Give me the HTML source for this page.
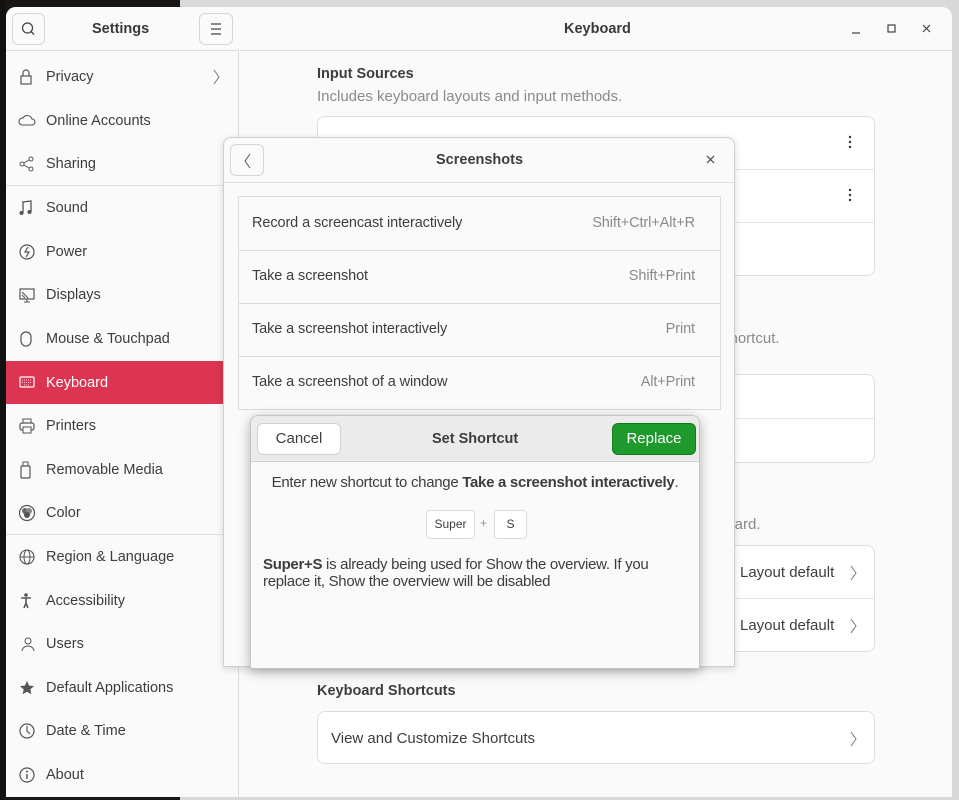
<!DOCTYPE html>
<html><head><meta charset="utf-8"><style>
*{box-sizing:border-box;margin:0;padding:0}
body{width:959px;height:800px;position:relative;overflow:hidden;background:#1a1614;font-family:"Liberation Sans",sans-serif;font-size:15px;color:#3d3d3d}
.a{position:absolute}
.t{position:absolute;white-space:nowrap}
.win{left:6px;top:7px;width:946px;height:790px;background:#fafafa;border-radius:10px 10px 0 0;overflow:hidden}
.side{left:0;top:0;width:233px;height:790px;background:#fafafa;border-right:1px solid #dcdcdc}
.item{position:absolute;left:0;width:233px;height:43px}
.item .lbl{position:absolute;left:40px;top:14px;font-size:14.5px}
.item svg{position:absolute;left:12px;top:13px}
.card{position:absolute;background:#fff;border:1px solid #dedede;border-radius:8px}
.sep{position:absolute;left:0;right:0;height:1px;background:#e6e6e6}
.chev{position:absolute}
.btn{position:absolute;border:1px solid #d6d6d6;border-radius:6px;background:#fafafa}
.lst .t{font-size:14.5px;letter-spacing:-0.1px}
</style></head><body>
<div class="a" style="left:180px;top:0;width:779px;height:800px;background:#d9d9d9"></div>
<div class="a" style="left:0;top:0;width:6px;height:800px;background:#111"></div>
<div class="a win">
 <div class="a side">
  <div class="a" style="left:0;top:0;width:233px;height:44px;border-bottom:1px solid #dcdcdc;background:#fafafa"></div>
  <div class="btn" style="left:6px;top:6px;width:33px;height:32px"><svg width="31" height="30"><circle cx="14.5" cy="14" r="5" fill="none" stroke="#444" stroke-width="1.3"/><line x1="18" y1="17.5" x2="21" y2="20.5" stroke="#444" stroke-width="1.3"/></svg></div>
  <div class="t" style="left:86px;top:14px;font-weight:bold;font-size:14.5px;color:#3a3a3a">Settings</div>
  <div class="btn" style="left:193px;top:6px;width:34px;height:32px"><svg width="32" height="30"><path d="M11 10h10M11 15h10M11 20h10" stroke="#444" stroke-width="1.2"/></svg></div>
  <div class="item" style="top:48px"><svg width="16" height="18"><rect x="3" y="8" width="10" height="8" fill="none" stroke="#555" stroke-width="1.2"/><path d="M5 8V5a3 3 0 0 1 6 0v3" fill="none" stroke="#555" stroke-width="1.2"/></svg><span class="lbl">Privacy</span><svg class="chev" style="left:207px;top:14px" width="8" height="16"><path d="M1 1l5 7-5 7" fill="none" stroke="#777"/></svg></div>
  <div class="item" style="top:92px"><svg width="18" height="16"><path d="M4 13h10a3 3 0 0 0 0-6 5 5 0 0 0-9-1 3.5 3.5 0 0 0-1 7z" fill="none" stroke="#555" stroke-width="1.1"/></svg><span class="lbl">Online Accounts</span></div>
  <div class="item" style="top:135px"><svg width="18" height="18"><circle cx="4" cy="9" r="2" fill="none" stroke="#555"/><circle cx="13" cy="4" r="2" fill="none" stroke="#555"/><circle cx="13" cy="14" r="2" fill="none" stroke="#555"/><path d="M6 8l5-3M6 10l5 3" stroke="#555"/></svg><span class="lbl">Sharing</span></div>
  <div class="a" style="left:0;top:178px;width:233px;height:1px;background:#e0e0e0"></div>
  <div class="item" style="top:179px"><svg width="16" height="18"><path d="M5 14V3l8-1v11" fill="none" stroke="#555" stroke-width="1.3"/><circle cx="3.5" cy="14" r="2" fill="#555"/><circle cx="11.5" cy="13" r="2" fill="#555"/></svg><span class="lbl">Sound</span></div>
  <div class="item" style="top:223px"><svg width="18" height="18"><circle cx="9" cy="9" r="7" fill="none" stroke="#555" stroke-width="1.2"/><path d="M10 4l-3 5h4l-3 5" fill="none" stroke="#555" stroke-width="1.2"/></svg><span class="lbl">Power</span></div>
  <div class="item" style="top:266px"><svg width="18" height="18"><rect x="2" y="3" width="14" height="10" fill="none" stroke="#555" stroke-width="1.2"/><path d="M6 16h6M9 13v3M4 6l6 6M4 9l3 3" stroke="#555"/></svg><span class="lbl">Displays</span></div>
  <div class="item" style="top:310px"><svg width="16" height="18"><rect x="3" y="2" width="10" height="14" rx="5" fill="none" stroke="#555" stroke-width="1.2"/></svg><span class="lbl">Mouse &amp; Touchpad</span></div>
  <div class="item" style="top:354px;background:#db3552;width:233px;color:#fff"><svg width="18" height="16"><rect x="2" y="3" width="14" height="10" rx="1" fill="none" stroke="#fff" stroke-width="1.2"/><path d="M4 6h10M4 8.5h10M6 11h6" stroke="#fff" stroke-width=".8" stroke-dasharray="1 1"/></svg><span class="lbl" style="color:#fff">Keyboard</span></div>
  <div class="item" style="top:397px"><svg width="18" height="18"><path d="M5 6V2h8v4" fill="none" stroke="#555"/><rect x="2" y="6" width="14" height="7" rx="2" fill="none" stroke="#555" stroke-width="1.2"/><rect x="5" y="10" width="8" height="6" fill="#fafafa" stroke="#555"/></svg><span class="lbl">Printers</span></div>
  <div class="item" style="top:441px"><svg width="16" height="18"><rect x="3" y="5" width="9" height="12" rx="1" fill="none" stroke="#555" stroke-width="1.2"/><rect x="5" y="1" width="5" height="4" fill="none" stroke="#555"/></svg><span class="lbl">Removable Media</span></div>
  <div class="item" style="top:484px"><svg width="18" height="18"><circle cx="9" cy="9" r="7.5" fill="none" stroke="#555" stroke-width="1.2"/><circle cx="7" cy="7" r="3" fill="#666"/><circle cx="11" cy="7" r="3" fill="#888"/><circle cx="9" cy="11" r="3" fill="#555"/></svg><span class="lbl">Color</span></div>
  <div class="a" style="left:0;top:527px;width:233px;height:1px;background:#e0e0e0"></div>
  <div class="item" style="top:528px"><svg width="18" height="18"><circle cx="9" cy="9" r="7" fill="none" stroke="#555" stroke-width="1.1"/><ellipse cx="9" cy="9" rx="3" ry="7" fill="none" stroke="#555"/><path d="M2 9h14" stroke="#555"/></svg><span class="lbl">Region &amp; Language</span></div>
  <div class="item" style="top:572px"><svg width="16" height="18"><circle cx="8" cy="3" r="1.8" fill="#555"/><path d="M3 6h10M8 6v5M6 16l2-5 2 5" stroke="#555" stroke-width="1.6" fill="none"/></svg><span class="lbl">Accessibility</span></div>
  <div class="item" style="top:615px"><svg width="18" height="18"><circle cx="10" cy="6" r="3" fill="none" stroke="#555"/><path d="M4 16a6 5 0 0 1 12 0" fill="none" stroke="#555"/></svg><span class="lbl">Users</span></div>
  <div class="item" style="top:659px"><svg width="18" height="18"><path d="M9 2l2.1 4.6 5 .5-3.8 3.3 1.1 4.9L9 12.8 4.6 15.3l1.1-4.9L1.9 7.1l5-.5z" fill="#555"/></svg><span class="lbl">Default Applications</span></div>
  <div class="item" style="top:702px"><svg width="18" height="18"><circle cx="9" cy="9" r="7" fill="none" stroke="#555" stroke-width="1.2"/><path d="M9 4v5l3 3" fill="none" stroke="#555" stroke-width="1.2"/></svg><span class="lbl">Date &amp; Time</span></div>
  <div class="item" style="top:746px"><svg width="18" height="18"><circle cx="9" cy="9" r="7" fill="none" stroke="#555" stroke-width="1.2"/><path d="M9 8v5" stroke="#555" stroke-width="1.4"/><circle cx="9" cy="5.5" r="1" fill="#555"/></svg><span class="lbl">About</span></div>
 </div>
 <div class="a" style="left:234px;top:0;width:712px;height:44px;border-bottom:1px solid #dcdcdc;background:#fafafa"></div>
 <div class="t" style="left:558px;top:14px;font-weight:bold;font-size:14.5px;color:#3a3a3a">Keyboard</div>
 <svg class="a" style="left:840px;top:14px" width="100" height="18"><path d="M6 12h8" stroke="#444" stroke-width="1.2"/><rect x="42" y="4" width="7" height="7" fill="none" stroke="#444" stroke-width="1.2"/><path d="M77 4l7 7M84 4l-7 7" stroke="#444" stroke-width="1.2"/></svg>
 <div class="t" style="left:311px;top:59px;font-weight:bold;font-size:14.5px">Input Sources</div>
 <div class="t" style="left:311px;top:81px;color:#8a8a8a">Includes keyboard layouts and input methods.</div>
 <div class="card" style="left:311px;top:109px;width:558px;height:160px">
  <div class="sep" style="top:52px"></div><div class="sep" style="top:105px"></div>
  <svg class="a" style="left:529px;top:18px" width="6" height="16"><circle cx="3" cy="2" r="1.2" fill="#333"/><circle cx="3" cy="7" r="1.2" fill="#333"/><circle cx="3" cy="12" r="1.2" fill="#333"/></svg>
  <svg class="a" style="left:529px;top:71px" width="6" height="16"><circle cx="3" cy="2" r="1.2" fill="#333"/><circle cx="3" cy="7" r="1.2" fill="#333"/><circle cx="3" cy="12" r="1.2" fill="#333"/></svg>
 </div>
 <div class="t" style="left:716px;top:323px;color:#8a8a8a">shortcut.</div>
 <div class="card" style="left:311px;top:367px;width:558px;height:89px"><div class="sep" style="top:43px"></div></div>
 <div class="t" style="left:712px;top:509px;color:#8a8a8a">board.</div>
 <div class="card" style="left:311px;top:538px;width:558px;height:107px">
  <div class="sep" style="top:52px"></div>
  <div class="t" style="left:422px;top:18px">Layout default</div><svg class="chev" style="left:532px;top:19px" width="8" height="16"><path d="M1 1l5 7-5 7" fill="none" stroke="#777"/></svg>
  <div class="t" style="left:422px;top:71px">Layout default</div><svg class="chev" style="left:532px;top:72px" width="8" height="16"><path d="M1 1l5 7-5 7" fill="none" stroke="#777"/></svg>
 </div>
 <div class="t" style="left:311px;top:676px;font-weight:bold;font-size:14.5px">Keyboard Shortcuts</div>
 <div class="card" style="left:311px;top:704px;width:558px;height:53px">
  <div class="t" style="left:13px;top:18px">View and Customize Shortcuts</div><svg class="chev" style="left:532px;top:19px" width="8" height="16"><path d="M1 1l5 7-5 7" fill="none" stroke="#777"/></svg>
 </div>
</div>
<div class="a" style="left:223px;top:137px;width:512px;height:530px;background:#fafafa;border:1px solid #cfcfcf;border-radius:8px 8px 0 0;box-shadow:0 2px 8px rgba(0,0,0,.15)">
 <div class="a" style="left:0;top:0;width:510px;height:45px;border-bottom:1px solid #dcdcdc"></div>
 <div class="btn" style="left:6px;top:6px;width:34px;height:32px"><svg class="a" style="left:13px;top:8px" width="8" height="16"><path d="M6 1L1 8l5 7" fill="none" stroke="#555"/></svg></div>
 <div class="t" style="left:212px;top:14px;font-weight:bold;font-size:14.5px">Screenshots</div>
 <svg class="a" style="left:482px;top:17px" width="10" height="10"><path d="M1 1l7 7M8 1l-7 7" stroke="#444" stroke-width="1.2"/></svg>
 <div class="a lst" style="left:14px;top:58px;width:483px;height:214px;background:#fafafa;border:1px solid #dcdcdc">
  <div class="sep" style="top:53px;background:#dcdcdc"></div><div class="sep" style="top:106px;background:#dcdcdc"></div><div class="sep" style="top:159px;background:#dcdcdc"></div>
  <div class="t" style="left:13px;top:18px">Record a screencast interactively</div><div class="t" style="right:25px;top:18px;color:#8a8a8a">Shift+Ctrl+Alt+R</div>
  <div class="t" style="left:13px;top:71px">Take a screenshot</div><div class="t" style="right:25px;top:71px;color:#8a8a8a">Shift+Print</div>
  <div class="t" style="left:13px;top:124px">Take a screenshot interactively</div><div class="t" style="right:25px;top:124px;color:#8a8a8a">Print</div>
  <div class="t" style="left:13px;top:177px">Take a screenshot of a window</div><div class="t" style="right:25px;top:177px;color:#8a8a8a">Alt+Print</div>
 </div>
</div>
<div class="a" style="left:250px;top:415px;width:450px;height:254px;background:#fafafa;border:1px solid #c6c6c6;border-radius:8px 8px 0 0;box-shadow:0 3px 12px rgba(0,0,0,.3)">
 <div class="a" style="left:0;top:0;width:448px;height:46px;background:#ebebeb;border-bottom:1px solid #d0d0d0;border-radius:8px 8px 0 0"></div>
 <div class="a" style="left:6px;top:7px;width:84px;height:32px;background:#fff;border:1px solid #d0d0d0;border-radius:6px;text-align:center;line-height:30px">Cancel</div>
 <div class="t" style="left:181px;top:15px;font-weight:bold;font-size:14.5px">Set Shortcut</div>
 <div class="a" style="left:361px;top:7px;width:84px;height:32px;background:#1e9a2c;border:1px solid #127a1e;border-radius:6px;text-align:center;line-height:30px;color:#fff">Replace</div>
 <div class="t" style="left:0;width:448px;text-align:center;top:58px;letter-spacing:-0.3px">Enter new shortcut to change <b>Take a screenshot interactively</b>.</div>
 <div class="a" style="left:175px;top:94px;width:49px;height:29px;background:#fff;border:1px solid #dcdcdc;border-radius:4px;text-align:center;line-height:27px;font-size:12px">Super</div>
 <div class="t" style="left:229px;top:100px;color:#999;font-size:12px">+</div>
 <div class="a" style="left:243px;top:94px;width:33px;height:29px;background:#fff;border:1px solid #dcdcdc;border-radius:4px;text-align:center;line-height:27px;font-size:12px">S</div>
 <div class="a" style="left:12px;top:140px;width:400px;line-height:17px;letter-spacing:-0.3px"><b>Super+S</b> is already being used for Show the overview. If you replace it, Show the overview will be disabled</div>
</div>
</body></html>
